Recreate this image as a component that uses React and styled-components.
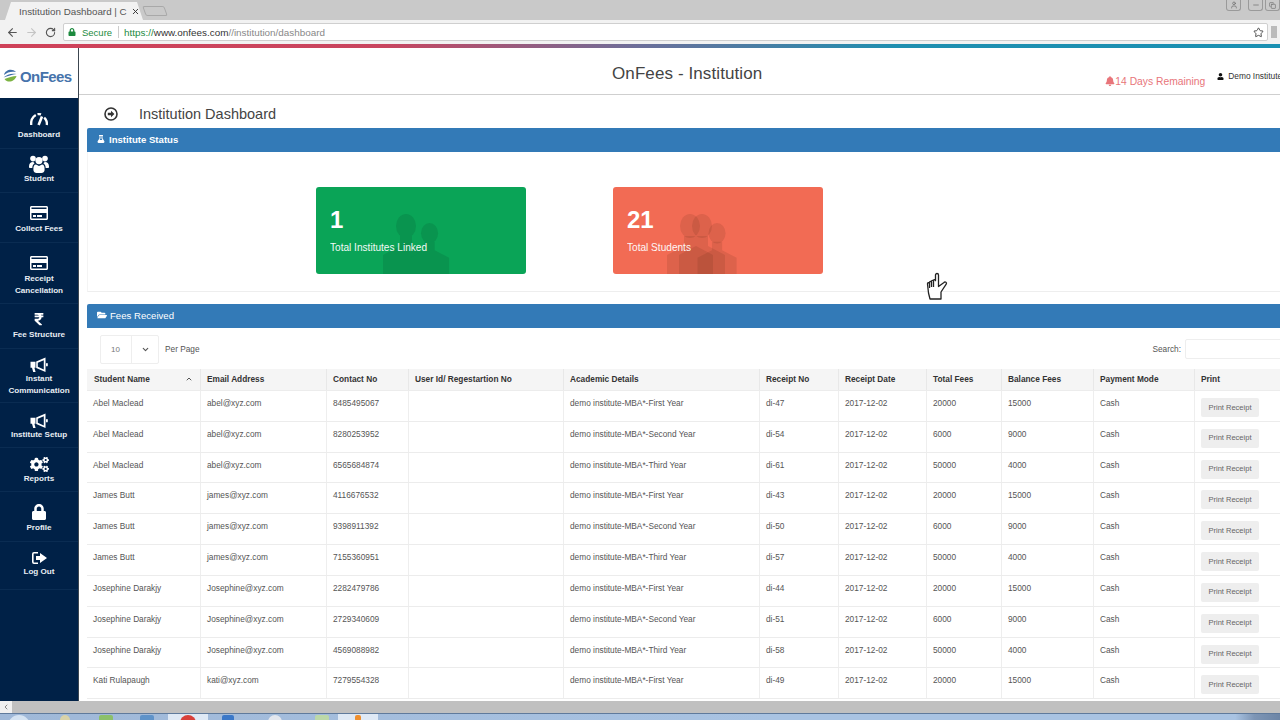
import React from 'react'
import styled, { createGlobalStyle } from 'styled-components'
import { ArrowLeft, ArrowRight, RotateCw, Star, ChevronDown, ChevronUp, ChevronLeft, Minus, Copy, User, X } from 'lucide-react'
import {
  FaRegCreditCard,
  FaRupeeSign,
  FaCogs,
  FaLock,
  FaBell,
  FaUser,
  FaFolderOpen,
  FaFlask,
} from 'react-icons/fa'

const GlobalStyle = createGlobalStyle`
  html, body {
    margin: 0;
    padding: 0;
    background: #fff;
    font-family: "Liberation Sans", Arial, sans-serif;
  }
  * {
    box-sizing: border-box;
  }
`

const Screen = styled.div`
  position: relative;
  width: 1280px;
  height: 720px;
  display: flex;
  flex-direction: column;
  overflow: hidden;
`

/* browser chrome */
const TabBar = styled.div`
  height: 20px;
  flex: none;
  display: flex;
  align-items: flex-end;
  background: #c9c9c9;
  padding-left: 5px;
`
const Tab = styled.div`
  width: 138px;
  height: 18px;
  display: flex;
  align-items: center;
  padding: 0 10px 0 10px;
  gap: 4px;
  background: #f2f2f2;
  clip-path: polygon(0 100%, 6px 0, 132px 0, 100% 100%);
  font-size: 9.8px;
  color: #555;
  white-space: nowrap;
`
const TabTitle = styled.span`
  flex: none;
`
const TabClose = styled.span`
  display: flex;
  margin-left: auto;
  color: #333;
`
const NewTab = styled.div`
  width: 22px;
  height: 10px;
  margin: 0 0 4px 1px;
  border: 1px solid #a8a8a8;
  border-radius: 2px;
  transform: skewX(20deg);
`
const WindowButtons = styled.div`
  margin-left: auto;
  align-self: flex-start;
  display: flex;
  gap: 2px;
`
const WindowButton = styled.div`
  width: ${p => p.$w}px;
  height: 11px;
  margin-left: ${p => p.$gap || 0}px;
  display: flex;
  align-items: center;
  justify-content: center;
  color: #666;
  border: 1px solid #9a9a9a;
  border-top: none;
  border-radius: 0 0 3px 3px;
`
const Toolbar = styled.div`
  height: 24px;
  flex: none;
  display: flex;
  align-items: center;
  background: #f2f2f2;
  padding-left: 3px;
  color: #555;
`
const NavButton = styled.div`
  width: 19px;
  display: flex;
  justify-content: center;
  color: ${p => p.$off ? '#c4c4c4' : '#555'};
`
const Omnibox = styled.div`
  width: 1205px;
  height: 18px;
  margin-left: 3px;
  display: flex;
  align-items: center;
  padding: 0 3px 0 4px;
  background: #fff;
  border: 1px solid #cfcfcf;
  border-radius: 2px;
  font-size: 9.5px;
  color: #777;
`
const SecureText = styled.span`
  color: #1c8a3e;
  margin-left: 6px;
`
const UrlDivider = styled.span`
  width: 1px;
  height: 12px;
  background: #ccc;
  margin: 0 5px 0 6px;
`
const UrlPart = styled.span`
  font-size: 9.9px;
  color: ${p => p.$c};
`
const StarIcon = styled.span`
  margin-left: auto;
  display: flex;
  color: #444;
`
const ToolbarEnd = styled.div`
  width: 6px;
  height: 12px;
  margin-left: 3px;
  background: #bbb;
`
const Stripe = styled.div`
  height: 4px;
  flex: none;
  background: linear-gradient(90deg, #cf4259 0%, #c9455f 30%, #6c6f9a 50%, #1f8fb0 70%, #1a90b2 100%);
`

/* page */
const Body = styled.div`
  flex: 1;
  min-height: 0;
  display: flex;
`
const Sidebar = styled.aside`
  width: 79px;
  flex: none;
  display: flex;
  flex-direction: column;
  background: #002147;
  border-right: 1px solid #3c4650;
`
const LogoBox = styled.div`
  height: 50px;
  flex: none;
  display: flex;
  align-items: center;
  gap: 3px;
  padding: 6px 0 0 3px;
  background: #fff;
`
const LogoText = styled.span`
  font-size: 15px;
  font-weight: 700;
  letter-spacing: -0.6px;
  color: #4673ab;
`
const NavItem = styled.div`
  height: ${p => p.$h}px;
  flex: none;
  display: flex;
  flex-direction: column;
  align-items: center;
  padding-top: ${p => p.$top}px;
  border-bottom: 1px solid #0a2c52;
  color: #fff;
`
const NavIcon = styled.div`
  height: ${p => p.$h}px;
  margin-bottom: ${p => p.$gap}px;
  display: flex;
  align-items: center;
  justify-content: center;
  font-size: ${p => p.$size}px;
`
const NavLabel = styled.div`
  font-size: 8.1px;
  font-weight: 700;
  line-height: 12px;
  text-align: center;
  color: #e8edf3;
`
const Main = styled.main`
  flex: 1;
  min-width: 0;
  display: flex;
  flex-direction: column;
  overflow: hidden;
`
const Header = styled.header`
  height: 47px;
  flex: none;
  display: flex;
  border-bottom: 1px solid #cfcfcf;
`
const HeaderTitle = styled.h1`
  margin: 16px 0 0 533px;
  font-size: 17px;
  font-weight: 400;
  line-height: 20px;
  letter-spacing: 0.1px;
  color: #444;
  white-space: nowrap;
`
const Remaining = styled.div`
  margin: 27px 0 0 343px;
  display: flex;
  align-items: center;
  height: 12px;
  font-size: 10.3px;
  color: #e8757a;
  white-space: nowrap;
`
const DemoUser = styled.div`
  margin: 22px 0 0 12px;
  display: flex;
  align-items: center;
  gap: 4px;
  height: 12px;
  font-size: 8.4px;
  color: #333;
  white-space: nowrap;
`
const TitleRow = styled.div`
  height: 33px;
  flex: none;
  display: flex;
  align-items: center;
  padding: 4px 0 0 25px;
  color: #333;
`
const PageTitle = styled.h2`
  margin: 0 0 0 21px;
  font-size: 14.5px;
  font-weight: 400;
  color: #444;
`
const Panels = styled.div`
  width: 1201px;
  margin-left: 8px;
  display: flex;
  flex-direction: column;
`
const PanelHeading = styled.div`
  height: 24px;
  display: flex;
  align-items: center;
  gap: ${p => p.$gap}px;
  padding: 0 0 2px 10px;
  background: #337ab7;
  color: #fff;
  font-size: 9.6px;
  font-weight: ${p => p.$bold ? 700 : 400};
  border-radius: 2px 0 0 0;
`
const StatusBody = styled.div`
  height: 140px;
  margin-bottom: 12px;
  display: flex;
  gap: 87px;
  padding: 35px 0 0 228px;
  border-bottom: 1px solid #eee;
  border-left: 1px solid #f4f4f4;
`
const StatCard = styled.div`
  position: relative;
  width: 210px;
  height: 87px;
  padding: 19px 14px;
  overflow: hidden;
  border-radius: 3px;
  background: ${p => p.$bg};
  color: #fff;
`
const StatValue = styled.div`
  font-size: 24px;
  font-weight: 700;
  line-height: 27px;
  margin-bottom: 9px;
`
const StatLabel = styled.div`
  position: relative;
  font-size: 10.1px;
  line-height: 12px;
  opacity: 0.95;
`
const Silhouettes = styled.svg`
  position: absolute;
  left: 50px;
  bottom: 0;
`
const FeesBody = styled.div`
  display: flex;
  flex-direction: column;
`
const Controls = styled.div`
  height: 41px;
  display: flex;
  padding: 7px 0 0 13px;
`
const PageSelect = styled.div`
  width: 59px;
  height: 29px;
  display: flex;
  align-items: center;
  border: 1px solid #eee;
  border-radius: 2px;
  color: #777;
  font-size: 8px;
`
const SelectValue = styled.span`
  width: 31px;
  height: 100%;
  display: flex;
  align-items: center;
  padding-left: 10px;
  border-right: 1px solid #eee;
`
const SelectArrow = styled.span`
  flex: 1;
  display: flex;
  justify-content: center;
  color: #555;
`
const PerPage = styled.span`
  margin: 8px 0 0 6px;
  font-size: 8.3px;
  line-height: 12px;
  color: #555;
`
const SearchBox = styled.div`
  margin: 4px 0 0 auto;
  height: 20px;
  display: flex;
  align-items: center;
  gap: 4px;
  font-size: 8.3px;
  color: #555;
`
const SearchInput = styled.div`
  width: 103px;
  height: 20px;
  border: 1px solid #eee;
  border-radius: 2px;
`
const Row = styled.div`
  display: grid;
  grid-template-columns: 114px 126px 82px 155px 196px 79px 88px 75px 92px 101px 93px;
  height: ${p => p.$head ? 22 : 30.83}px;
  background: ${p => p.$head ? '#f5f5f5' : '#fff'};
  border-bottom: 1px solid #ececec;
`
const HeadCell = styled.div`
  display: flex;
  align-items: center;
  justify-content: space-between;
  padding: 0 7px 1px 6px;
  border-right: 1px solid #e8e8e8;
  font-size: 8.3px;
  font-weight: 700;
  color: #333;
  white-space: nowrap;
  &:first-child {
    padding-left: 7px;
  }
`
const Cell = styled.div`
  padding: 6px 0 0 6px;
  border-right: 1px solid #eee;
  font-size: 8.3px;
  line-height: 12px;
  color: #555;
  white-space: nowrap;
`
const PrintButton = styled.div`
  width: 58px;
  height: 19px;
  margin-top: 1px;
  display: flex;
  align-items: center;
  justify-content: center;
  background: #eee;
  border-radius: 2px;
  font-size: 7.5px;
  color: #666;
`

/* bottom of the window */
const HScroll = styled.div`
  height: 12px;
  flex: none;
  display: flex;
  background: #c0c0c0;
`
const ScrollEnd = styled.div`
  width: 12px;
  display: flex;
  align-items: center;
  justify-content: center;
  background: #f0f0f0;
  color: #888;
`
const Taskbar = styled.div`
  height: 7px;
  flex: none;
  display: flex;
  overflow: hidden;
  background: linear-gradient(90deg, #9fb8d8 0%, #a9c3e2 60%, #a9c3e2 96.5%, #7d95b5 98%, #6c85a6 100%);
  border-top: 1px solid #5f7a9c;
`
const TaskSlot = styled.div`
  width: ${p => p.$w}px;
  display: flex;
  justify-content: center;
  background: ${p => p.$active ? '#dfe9f5' : 'transparent'};
`
const TaskIcon = styled.div`
  width: ${p => p.$s}px;
  height: ${p => p.$s}px;
  margin-top: 1px;
  border-radius: ${p => p.$round ? '50%' : '2px'};
  background: ${p => p.$c};
`
const Cursor = styled.svg`
  position: absolute;
  left: 925px;
  top: 272px;
`

const GaugeIcon = () => (
  <svg width="20" height="14" viewBox="0 0 20 14" fill="none" stroke="#fff" strokeWidth="2.3">
    <path d="M2.2 13 C1.8 8.5 3.5 5 6.8 3" />
    <path d="M8.5 2.2 C9.5 2 11 2 12 2.4" />
    <path d="M9.6 13 L13 4.5" strokeWidth="2.6" />
    <path d="M15.2 5.6 C17.2 7.5 18.2 10 17.8 13" />
  </svg>
)

const StudentIcon = () => (
  <svg width="20" height="18" viewBox="0 0 20 18" fill="#fff">
    <circle cx="4" cy="3.6" r="2.8" />
    <circle cx="16" cy="3.6" r="2.8" />
    <circle cx="10" cy="5.6" r="3.6" />
    <path d="M0 12.5 C-0.2 8.5 1.5 7 3.8 7 C4.6 7 5 7.6 5.6 8.3 C4 9.4 3.4 10.8 3.3 13 L0.8 13 Z" />
    <path d="M20 12.5 C20.2 8.5 18.5 7 16.2 7 C15.4 7 15 7.6 14.4 8.3 C16 9.4 16.6 10.8 16.7 13 L19.2 13 Z" />
    <path d="M4.4 15 C4.2 11.5 5 9.5 7 9.5 L10 11 L13 9.5 C15 9.5 15.8 11.5 15.6 15 C15.5 17 14 18 12.5 18 H7.5 C6 18 4.5 17 4.4 15 Z" />
  </svg>
)

const HornIcon = () => (
  <svg width="18" height="16" viewBox="0 0 18 16" fill="#fff" fillRule="evenodd">
    <path d="M0.5 4.8 H5.5 V10.8 H4.4 L5.6 15 H3.2 L2 10.8 H0.5 Z" />
    <path d="M6.2 4.6 L15.5 0.5 V15 L6.2 11 Z M7.8 5.8 V9.8 L13.8 12.4 V3.2 Z" />
    <rect x="16" y="6" width="1.8" height="3.4" rx="0.8" />
  </svg>
)

const LogoutIcon = () => (
  <svg width="16" height="14" viewBox="0 0 16 14" fill="#fff">
    <path d="M1 3 a2 2 0 0 1 2-2 h4 v1.6 h-4 a0.5 0.5 0 0 0 -0.4 0.4 v8 a0.5 0.5 0 0 0 0.4 0.4 h4 v1.6 h-4 a2 2 0 0 1-2-2 Z" />
    <path d="M9 2 L16 7 L9 12 V9 H5 V5 H9 Z" />
  </svg>
)

const TitleArrow = () => (
  <svg width="14" height="14" viewBox="0 0 14 14" fill="#333">
    <circle cx="7" cy="7" r="6" fill="none" stroke="#333" strokeWidth="1.6" />
    <path d="M3.8 5.8 H7 V3.8 L10.4 7 L7 10.2 V8.2 H3.8 Z" />
  </svg>
)

const LogoMark = ({ size }) => (
  <svg width={size} height={size} viewBox="0 0 14 14">
    <path d="M1 6 C2 1 9 -1 13 3 C9 2 4 3 1 6 Z" fill="#3f6fa8" />
    <path d="M0.5 8.5 C4 5 9 4 13.5 5 C10 5.5 4 7 0.5 8.5 Z" fill="#3f6fa8" />
    <path d="M1.5 10 C5 8.5 10 7 13.5 7 C12 12 5 15 1.5 10 Z" fill="#7cb342" />
  </svg>
)

const Person = ({ x, scale }) => (
  <g transform={`translate(${x} ${60 - 60 * scale}) scale(${scale})`}>
    <ellipse cx="23" cy="12" rx="10" ry="12" />
    <path d="M17 22 H29 V32 L46 41 V60 H0 V41 L17 32 Z" />
  </g>
)

const navItems = [
  { label: 'Dashboard', icon: <GaugeIcon />, h: 51, top: 14, ih: 14, gap: 3 },
  { label: 'Student', icon: <StudentIcon />, h: 44, top: 6, ih: 18, gap: 0 },
  { label: 'Collect Fees', icon: <FaRegCreditCard />, size: 18, h: 50, top: 12, ih: 15, gap: 3 },
  { label: <>Receipt<br />Cancellation</>, icon: <FaRegCreditCard />, size: 18, h: 61, top: 12, ih: 15, gap: 3 },
  { label: 'Fee Structure', icon: <FaRupeeSign />, size: 14, h: 45, top: 7, ih: 16, gap: 2 },
  { label: <>Instant<br />Communication</>, icon: <HornIcon />, h: 54, top: 7, ih: 17, gap: 0 },
  { label: 'Institute Setup', icon: <HornIcon />, h: 45, top: 9, ih: 17, gap: 0 },
  { label: 'Reports', icon: <FaCogs />, size: 19, h: 44, top: 8, ih: 17, gap: 0 },
  { label: 'Profile', icon: <FaLock />, size: 16, h: 50, top: 11, ih: 17, gap: 2 },
  { label: 'Log Out', icon: <LogoutIcon />, h: 48, top: 8, ih: 15, gap: 1 },
]

const columns = [
  'Student Name',
  'Email Address',
  'Contact No',
  'User Id/ Regestartion No',
  'Academic Details',
  'Receipt No',
  'Receipt Date',
  'Total Fees',
  'Balance Fees',
  'Payment Mode',
  'Print',
]

const plans = [
  ['First', '20000', '15000'],
  ['Second', '6000', '9000'],
  ['Third', '50000', '4000'],
]

const rows = [
  ['Abel Maclead', 'abel@xyz.com', '8485495067', 0, 'di-47'],
  ['Abel Maclead', 'abel@xyz.com', '8280253952', 1, 'di-54'],
  ['Abel Maclead', 'abel@xyz.com', '6565684874', 2, 'di-61'],
  ['James Butt', 'james@xyz.com', '4116676532', 0, 'di-43'],
  ['James Butt', 'james@xyz.com', '9398911392', 1, 'di-50'],
  ['James Butt', 'james@xyz.com', '7155360951', 2, 'di-57'],
  ['Josephine Darakjy', 'Josephine@xyz.com', '2282479786', 0, 'di-44'],
  ['Josephine Darakjy', 'Josephine@xyz.com', '2729340609', 1, 'di-51'],
  ['Josephine Darakjy', 'Josephine@xyz.com', '4569088982', 2, 'di-58'],
  ['Kati Rulapaugh', 'kati@xyz.com', '7279554328', 0, 'di-49'],
]

const taskSlots = [
  { w: 8 },
  { w: 22, c: '#d5e3f2', s: 22, round: true },
  { w: 27 },
  { w: 16, c: '#d9d2a8', s: 10, round: true },
  { w: 22 },
  { w: 22, c: '#8cc06a', s: 14 },
  { w: 20 },
  { w: 20, c: '#5f93c9', s: 14 },
  { w: 11 },
  { w: 40, c: '#d8403a', s: 16, round: true, active: true },
  { w: 10 },
  { w: 20, c: '#3b78c8', s: 12 },
  { w: 27 },
  { w: 20, c: '#e3e7ee', s: 14, round: true },
  { w: 27 },
  { w: 20, c: '#bcd8a8', s: 14 },
  { w: 6 },
  { w: 40, c: '#ef8f2e', s: 6, active: true },
]

const App = () => {
  return (
    <Screen>
      <GlobalStyle />
      <TabBar>
        <Tab>
          <LogoMark size={11} />
          <TabTitle>Institution Dashboard | C</TabTitle>
          <TabClose><X size={9} strokeWidth={2.5} /></TabClose>
        </Tab>
        <NewTab />
        <WindowButtons>
          <WindowButton $w={15}><User size={8} /></WindowButton>
          <WindowButton $w={15} $gap={5}><Minus size={8} /></WindowButton>
          <WindowButton $w={15}><Copy size={7} /></WindowButton>
        </WindowButtons>
      </TabBar>
      <Toolbar>
        <NavButton><ArrowLeft size={13} /></NavButton>
        <NavButton $off><ArrowRight size={13} /></NavButton>
        <NavButton><RotateCw size={11} strokeWidth={2.4} /></NavButton>
        <Omnibox>
          <FaLock size={8} color="#1c8a3e" />
          <SecureText>Secure</SecureText>
          <UrlDivider />
          <UrlPart $c="#1c8a3e">https://</UrlPart>
          <UrlPart $c="#333">www.onfees.com</UrlPart>
          <UrlPart $c="#888">//institution/dashboard</UrlPart>
          <StarIcon><Star size={11} /></StarIcon>
        </Omnibox>
        <ToolbarEnd />
      </Toolbar>
      <Stripe />
      <Body>
        <Sidebar>
          <LogoBox>
            <LogoMark size={14} />
            <LogoText>OnFees</LogoText>
          </LogoBox>
          {navItems.map((item, i) => (
            <NavItem key={i} $h={item.h} $top={item.top}>
              <NavIcon $h={item.ih} $gap={item.gap} $size={item.size}>{item.icon}</NavIcon>
              <NavLabel>{item.label}</NavLabel>
            </NavItem>
          ))}
        </Sidebar>
        <Main>
          <Header>
            <HeaderTitle>OnFees - Institution</HeaderTitle>
            <Remaining><FaBell size={10} />14 Days Remaining</Remaining>
            <DemoUser><FaUser size={7} color="#111" />Demo Institute</DemoUser>
          </Header>
          <TitleRow>
            <TitleArrow />
            <PageTitle>Institution Dashboard</PageTitle>
          </TitleRow>
          <Panels>
            <PanelHeading $bold $gap={4}><FaFlask size={8} />Institute Status</PanelHeading>
            <StatusBody>
              <StatCard $bg="#0aa457">
                <Silhouettes width="100" height="60" viewBox="0 0 100 60" fill="#09944f">
                  <Person x={17} scale={1} />
                  <Person x={44} scale={0.85} />
                </Silhouettes>
                <StatValue>1</StatValue>
                <StatLabel>Total Institutes Linked</StatLabel>
              </StatCard>
              <StatCard $bg="#f26b54">
                <Silhouettes width="100" height="60" viewBox="0 0 100 60" fill="rgba(70,30,20,0.12)">
                  <Person x={4} scale={1} />
                  <Person x={16} scale={1} />
                  <Person x={34.5} scale={0.85} />
                </Silhouettes>
                <StatValue>21</StatValue>
                <StatLabel>Total Students</StatLabel>
              </StatCard>
            </StatusBody>
            <PanelHeading $gap={3}><FaFolderOpen size={10} />Fees Received</PanelHeading>
            <FeesBody>
              <Controls>
                <PageSelect>
                  <SelectValue>10</SelectValue>
                  <SelectArrow><ChevronDown size={9} strokeWidth={3} /></SelectArrow>
                </PageSelect>
                <PerPage>Per Page</PerPage>
                <SearchBox>Search:<SearchInput /></SearchBox>
              </Controls>
              <Row $head>
                {columns.map((name, i) => (
                  <HeadCell key={name}>
                    {name}
                    {i === 0 && <ChevronUp size={8} strokeWidth={3} color="#555" />}
                  </HeadCell>
                ))}
              </Row>
              {rows.map((row, i) => {
                const plan = plans[row[3]]
                return (
                  <Row key={i}>
                    <Cell>{row[0]}</Cell>
                    <Cell>{row[1]}</Cell>
                    <Cell>{row[2]}</Cell>
                    <Cell />
                    <Cell>demo institute-MBA*-{plan[0]} Year</Cell>
                    <Cell>{row[4]}</Cell>
                    <Cell>2017-12-02</Cell>
                    <Cell>{plan[1]}</Cell>
                    <Cell>{plan[2]}</Cell>
                    <Cell>Cash</Cell>
                    <Cell><PrintButton>Print Receipt</PrintButton></Cell>
                  </Row>
                )
              })}
            </FeesBody>
          </Panels>
        </Main>
      </Body>
      <HScroll>
        <ScrollEnd><ChevronLeft size={8} strokeWidth={3} /></ScrollEnd>
      </HScroll>
      <Taskbar>
        {taskSlots.map((slot, i) => (
          <TaskSlot key={i} $w={slot.w} $active={slot.active}>
            {slot.c && <TaskIcon $c={slot.c} $s={slot.s} $round={slot.round} />}
          </TaskSlot>
        ))}
      </Taskbar>
      <Cursor width="24" height="29" viewBox="0 0 24 29" fill="#fff" stroke="#222" strokeWidth="1.3" strokeLinejoin="round">
        <path d="M10.5 3 a1.5 1.5 0 0 1 3 0 V14.5 L19 10.5 a1.2 1.2 0 0 1 2.2 1.6 L16 20 V27 H5 L3.5 21 L2.5 12 a1 1 0 0 1 2 -0.5 a1.1 1.1 0 0 1 2 -1.5 a1.1 1.1 0 0 1 2 -1 a1 1 0 0 1 2 -0.5 Z" />
        <path d="M4.5 11.5 V16 M6.5 10 V15 M8.5 9 V15" fill="none" />
      </Cursor>
    </Screen>
  )
}

export default App
